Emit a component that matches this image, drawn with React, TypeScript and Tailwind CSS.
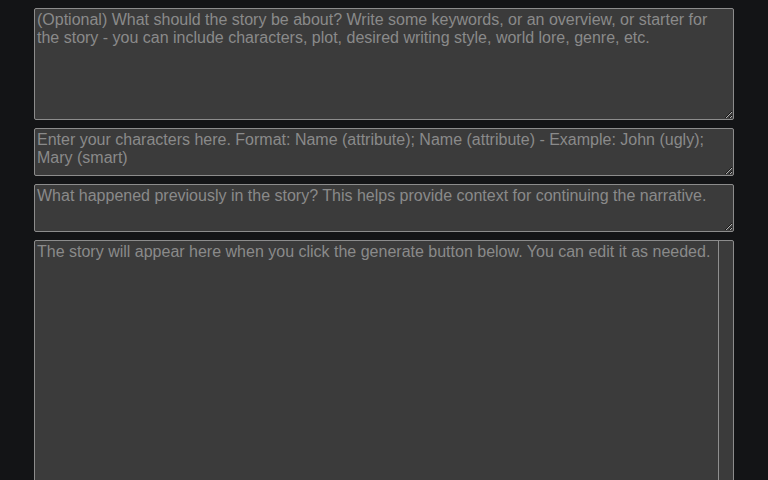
export default function App() {
  const font = "font-['Liberation_Sans',Arial,sans-serif]";
  const field =
    "block w-full rounded-[2px] border border-[#8c8c8c] bg-[#3b3b3b] p-[2px] text-[16px] leading-[18px] text-[#d0d0d0] placeholder:text-[#8a8a8a] outline-none [color-scheme:dark]";

  return (
    <div className={`min-h-screen bg-[#131416] pt-2 ${font}`}>
      <div className="mx-auto flex w-[700px] flex-col gap-2">
        <textarea
          className={`${field} resize-y h-[112px]`}
          placeholder="(Optional) What should the story be about? Write some keywords, or an overview, or starter for the story - you can include characters, plot, desired writing style, world lore, genre, etc."
        />
        <textarea
          className={`${field} resize-y h-[48px]`}
          placeholder="Enter your characters here. Format: Name (attribute); Name (attribute) - Example: John (ugly); Mary (smart)"
        />
        <textarea
          className={`${field} resize-y h-[48px]`}
          placeholder="What happened previously in the story? This helps provide context for continuing the narrative."
        />
        {/* story output with its scrollbar track */}
        <div className="flex h-[400px] rounded-[2px] border border-[#8c8c8c] bg-[#3b3b3b]">
          <textarea
            className="block h-full flex-1 resize-none bg-transparent p-[2px] text-[16px] leading-[18px] text-[#d0d0d0] placeholder:text-[#8a8a8a] outline-none"
            placeholder="The story will appear here when you click the generate button below. You can edit it as needed."
          />
          <div className="w-[15px] border-l border-[#8f8f8f]" />
        </div>
      </div>
    </div>
  );
}
